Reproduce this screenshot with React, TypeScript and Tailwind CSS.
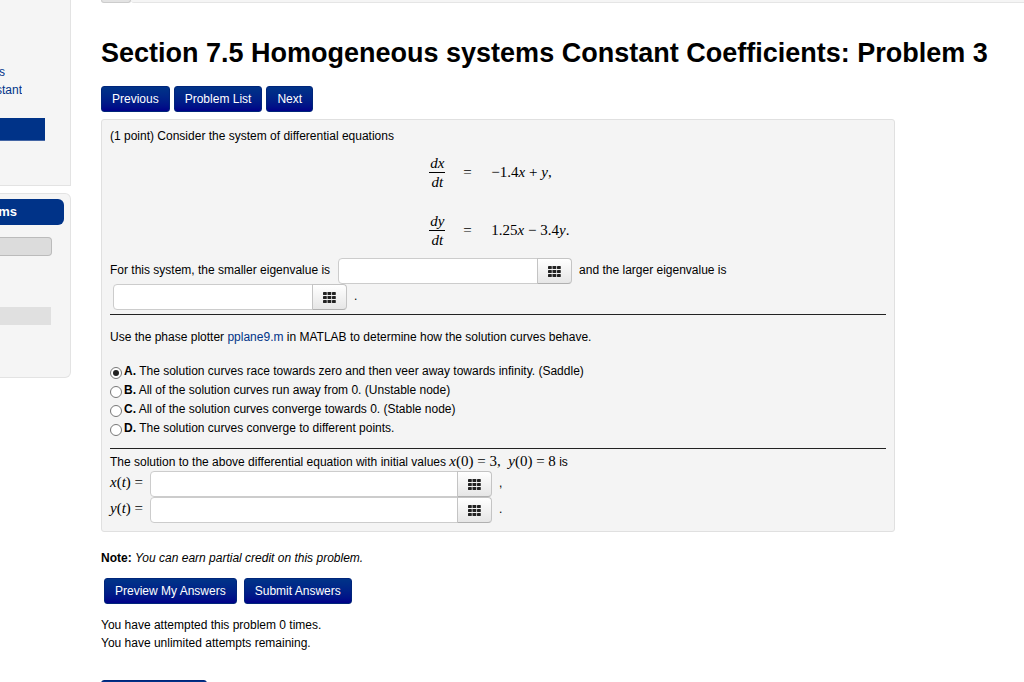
import { useState } from "react";
import type { ReactNode } from "react";

const choices = [
  {
    letter: "A",
    text: "The solution curves race towards zero and then veer away towards infinity. (Saddle)",
  },
  {
    letter: "B",
    text: "All of the solution curves run away from 0. (Unstable node)",
  },
  {
    letter: "C",
    text: "All of the solution curves converge towards 0. (Stable node)",
  },
  { letter: "D", text: "The solution curves converge to different points." },
];

function NavButton(props: { children: ReactNode }) {
  return (
    <button
      type="button"
      className="h-[26px] rounded-[3px] border border-[#00257a] bg-linear-to-b from-[#003388] to-[#000088] px-[10px] text-[12px] leading-[18px] text-white"
    >
      {props.children}
    </button>
  );
}

function GridIcon() {
  return (
    <svg width="13" height="11" viewBox="0 0 13 11" fill="#222" aria-hidden="true">
      {[0, 4, 8].map((y) =>
        [0, 4.5, 9].map((x) => (
          <rect key={`${x}-${y}`} x={x} y={y} width="3.8" height="3" rx="0.4" />
        ))
      )}
    </svg>
  );
}

function AnswerBox(props: { label: string; wide?: boolean }) {
  return (
    <span className="inline-flex h-[26px]">
      <input
        type="text"
        aria-label={props.label}
        className={`h-full rounded-l-[4px] border border-[#ccc] bg-white px-1 text-[12px] ${
          props.wide ? "w-[308px]" : "w-[200px]"
        }`}
      />
      <button
        type="button"
        aria-label="Equation editor"
        className="-ml-px flex h-full w-[35px] items-center justify-center rounded-r-[4px] border border-[#c4c4c4] border-b-[#b0b0b0] bg-linear-to-b from-white to-[#e6e6e6]"
      >
        <GridIcon />
      </button>
    </span>
  );
}

function MathText(props: { children: ReactNode }) {
  return (
    <span className="font-['Liberation_Serif',serif] text-[15px] leading-none whitespace-pre">
      {props.children}
    </span>
  );
}

function Fraction(props: { top: string; bottom: string }) {
  return (
    <span className="inline-flex flex-col items-center font-['Liberation_Serif',serif] text-[15px] leading-[18px] italic">
      <span className="w-4 border-b border-black text-center">{props.top}</span>
      <span>{props.bottom}</span>
    </span>
  );
}

function Sidebar() {
  return (
    <aside className="w-[71px] shrink-0 overflow-hidden leading-[18px]">
      <div className="h-[186px] border-r border-b border-[#e3e3e3] bg-[#f5f5f5] pt-[63px]">
        <a href="#s" className="flex w-[5px] justify-end overflow-hidden text-[#003388]">
          s
        </a>
        <a href="#constant" className="flex w-[22px] justify-end overflow-hidden text-[#003388]">
          stant
        </a>
        <div className="mt-[19px] h-[23px] w-[45px] border-b border-[#4466a5] bg-[#003388]" />
      </div>
      <div className="mt-[7px] h-[185px] rounded-r-[6px] border border-l-0 border-[#e3e3e3] bg-[#f5f5f5] pt-[5px]">
        <h2 className="flex h-[26px] w-16 items-center rounded-r-[6px] bg-[#003388] text-[13px] font-bold text-white">
          <span className="flex w-[17px] justify-end overflow-hidden">ms</span>
        </h2>
        <div className="mt-3 h-[19px] w-[52px] rounded-r-[4px] border border-l-0 border-[#bbb] bg-[#dcdcdc]" />
        <div className="mt-[51px] h-[18px] w-[51px] bg-[#e0e0e0]" />
      </div>
    </aside>
  );
}

export default function App() {
  const [choice, setChoice] = useState("A");

  return (
    <div className="flex h-screen overflow-hidden bg-white font-['Liberation_Sans',Arial,sans-serif] text-[12px] leading-[18px] text-black">
      <Sidebar />
      <main className="min-w-0 flex-1 pl-[30px]">
        <div className="flex h-[3px]">
          <div className="w-[30px] rounded-b-[4px] border border-t-0 border-[#ccc] bg-[#e3e3e3]" />
          <div className="flex-1 rounded-bl-[4px] border-b border-[#e5e5e5] bg-[#f5f5f5]" />
        </div>

        <h1 className="mt-8 text-[27px] leading-9 font-bold whitespace-nowrap">
          Section 7.5 Homogeneous systems Constant Coefficients: Problem 3
        </h1>

        <nav className="mt-[15px] flex gap-1">
          <NavButton>Previous</NavButton>
          <NavButton>Problem List</NavButton>
          <NavButton>Next</NavButton>
        </nav>

        <section className="mt-[7px] w-[86%] rounded-[3px] border border-[#e0e0e0] bg-[#f4f4f4] px-2 pt-[7px] pb-2">
          <p>(1 point) Consider the system of differential equations</p>

          <div className="mt-[9px] grid grid-cols-[16px_10px_auto] items-center justify-center gap-x-[18px] gap-y-[21px] pl-[3px]">
            <Fraction top="dx" bottom="dt" />
            <MathText>=</MathText>
            <MathText>
              −1.4<i>x</i> + <i>y</i>,
            </MathText>
            <Fraction top="dy" bottom="dt" />
            <MathText>=</MathText>
            <MathText>
              1.25<i>x</i> − 3.4<i>y</i>.
            </MathText>
          </div>

          <div className="mt-[9px] flex flex-wrap items-start leading-6">
            <span className="mr-2">For this system, the smaller eigenvalue is</span>
            <AnswerBox label="Smaller eigenvalue" />
            <span className="mx-[7px]">and the larger eigenvalue is</span>
            <span className="ml-[3px] flex gap-[7px]">
              <AnswerBox label="Larger eigenvalue" />.
            </span>
          </div>

          <hr className="mt-1 border-[#222]" />
          <p className="mt-[13px]">
            Use the phase plotter{" "}
            <a href="#pplane9" className="text-[#003388]">
              pplane9.m
            </a>{" "}
            in MATLAB to determine how the solution curves behave.
          </p>

          <div className="mt-4">
            {choices.map((item) => (
              <label key={item.letter} className="flex items-center leading-[19px]">
                <input
                  type="radio"
                  name="behavior"
                  checked={choice === item.letter}
                  onChange={() => setChoice(item.letter)}
                  className="mt-[2px] mr-[2px] flex size-3 appearance-none items-center justify-center rounded-full border border-[#777] bg-white checked:before:size-[6px] checked:before:rounded-full checked:before:bg-[#222]"
                />
                <span>
                  <b>{item.letter}.</b> {item.text}
                </span>
              </label>
            ))}
          </div>

          <hr className="mt-[10px] border-[#222]" />
          <p className="mt-1">
            The solution to the above differential equation with initial values{" "}
            <MathText>
              <i>x</i>(0) = 3,  <i>y</i>(0) = 8
            </MathText>{" "}
            is
          </p>
          <div className="flex items-start leading-6">
            <span className="w-10">
              <MathText>
                <i>x</i>(<i>t</i>) =
              </MathText>
            </span>
            <AnswerBox label="x(t)" wide />
            <span className="ml-[7px]">,</span>
          </div>
          <div className="flex items-start leading-6">
            <span className="w-10">
              <MathText>
                <i>y</i>(<i>t</i>) =
              </MathText>
            </span>
            <AnswerBox label="y(t)" wide />
            <span className="ml-[7px]">.</span>
          </div>
        </section>

        <p className="mt-[17px]">
          <b>Note:</b> <i>You can earn partial credit on this problem.</i>
        </p>
        <div className="mt-[11px] ml-[3px] flex gap-[7px]">
          <NavButton>Preview My Answers</NavButton>
          <NavButton>Submit Answers</NavButton>
        </div>
        <p className="mt-3">
          You have attempted this problem 0 times.
          <br />
          You have unlimited attempts remaining.
        </p>
        <button
          type="button"
          aria-label="Email instructor"
          className="mt-7 h-[26px] w-[106px] rounded-[3px] border border-[#00257a] bg-linear-to-b from-[#003388] to-[#000088]"
        />
      </main>
    </div>
  );
}
